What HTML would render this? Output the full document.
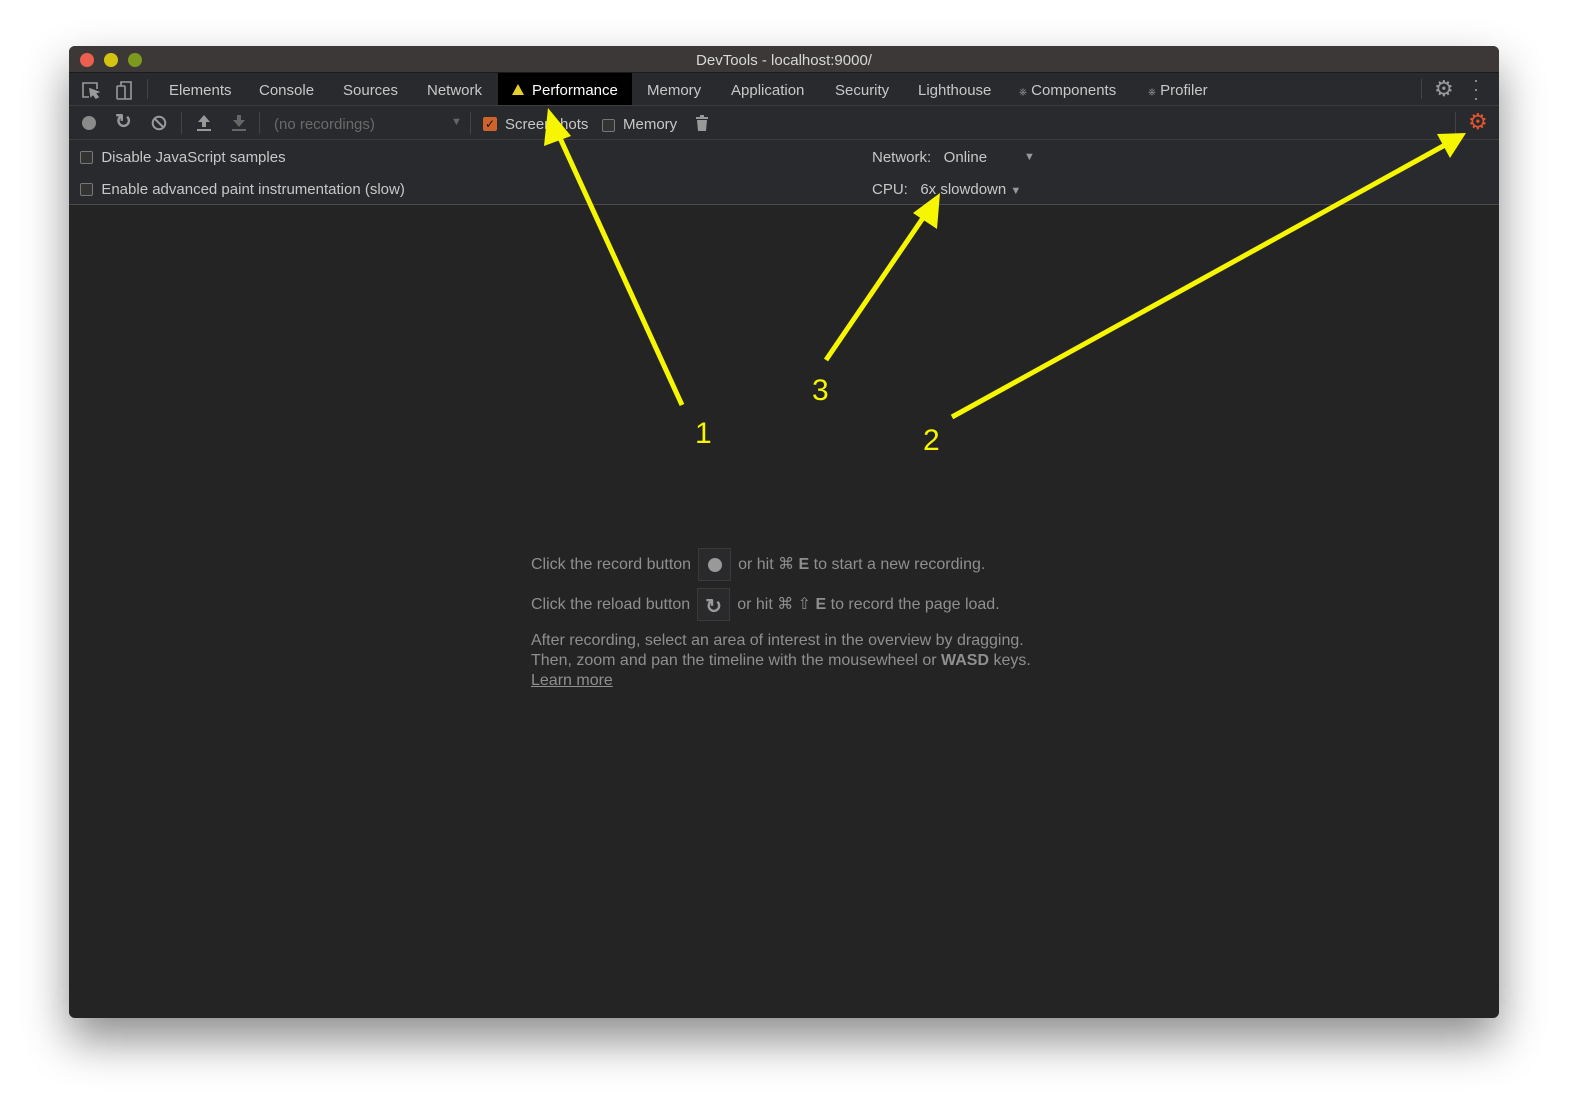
<!DOCTYPE html>
<html><head><meta charset="utf-8"><style>
*{margin:0;padding:0;box-sizing:border-box}
body{width:1572px;height:1112px;background:#fff;position:relative;overflow:hidden;font-family:"Liberation Sans",sans-serif;font-size:15px;color:#bdbdbd}
.win{position:absolute;left:69px;top:46px;width:1430px;height:972px;background:#242424;border-radius:6px;box-shadow:0 22px 45px rgba(0,0,0,.45);overflow:hidden}
.title{position:absolute;left:0;top:0;width:100%;height:27px;background:#3c3838;border-bottom:1px solid #1a1a1a;text-align:center;line-height:30px;color:#d8d8d8;font-size:15px}
.dot{position:absolute;top:7px;width:14px;height:14px;border-radius:50%}
.abs{position:absolute;white-space:nowrap}
.tabs{position:absolute;left:0;top:27px;width:100%;height:33px;background:#292a2d;border-bottom:1px solid #3d3d3d}
.tb{position:absolute;left:0;top:60px;width:100%;height:34px;background:#292a2d;border-bottom:1px solid #3d3d3d}
.set{position:absolute;left:0;top:94px;width:100%;height:65px;background:#292a2d;border-bottom:1px solid #4a4a4a}
.cb{display:inline-block;width:13px;height:13px;border:1px solid #777;border-radius:2px;vertical-align:-2px;background:#333}
.t{color:#c8c8c8}
.msg{color:#8f8f8f;font-size:16px}
.btn{display:inline-block;width:33px;height:33px;border:1px solid #3a3a3a;background:#2a2a2c;vertical-align:middle;margin:0 7px;position:relative}
</style></head><body>
<div class="win">
 <div class="title">DevTools - localhost:9000/
  <div class="dot" style="left:11px;background:#ec5f4f"></div>
  <div class="dot" style="left:35px;background:#d4c411"></div>
  <div class="dot" style="left:59px;background:#7c9a1e"></div>
 </div>
 <div class="tabs">
  <svg class="abs" style="left:12px;top:8px" width="60" height="20" viewBox="0 0 60 20" fill="none" stroke="#9a9a9a" stroke-width="1.6"><path d="M8 16H2V2h14v6"/><path d="M9 8l8 3-3 1 3 4-2 1-3-4-2 2z" fill="#9a9a9a"/><rect x="36" y="5" width="8" height="13" rx="1"/><path d="M40 5V1h10v17h-6"/></svg>
  <div class="abs" style="left:78px;top:6px;width:1px;height:20px;background:#444"></div>
  <div class="abs t" style="left:100px;top:9px">Elements</div>
  <div class="abs t" style="left:190px;top:9px">Console</div>
  <div class="abs t" style="left:274px;top:9px">Sources</div>
  <div class="abs t" style="left:358px;top:9px">Network</div>
  <div class="abs" style="left:429px;top:0;width:134px;height:32px;background:#000"></div>
  <svg class="abs" style="left:442px;top:10px" width="14" height="13"><path d="M7 1L13 12H1z" fill="#e6cf2b"/></svg>
  <div class="abs" style="left:463px;top:9px;color:#fff">Performance</div>
  <div class="abs t" style="left:578px;top:9px">Memory</div>
  <div class="abs t" style="left:662px;top:9px">Application</div>
  <div class="abs t" style="left:766px;top:9px">Security</div>
  <div class="abs t" style="left:849px;top:9px">Lighthouse</div>
  <div class="abs t" style="left:950px;top:9px"><span style="font-size:10px;color:#999">⎈</span> Components</div>
  <div class="abs t" style="left:1079px;top:9px"><span style="font-size:10px;color:#999">⎈</span> Profiler</div>
  <div class="abs" style="left:1352px;top:6px;width:1px;height:20px;background:#444"></div>
  <div class="abs" style="left:1365px;top:3px;font-size:22px;color:#999">⚙</div>
  <div class="abs" style="left:1404px;top:3px;font-size:18px;color:#999;line-height:9px">·<br>·<br>·</div>
 </div>
 <div class="tb">
  <div class="abs" style="left:13px;top:10px;width:14px;height:14px;border-radius:50%;background:#8a8a8a"></div>
  <div class="abs" style="left:46px;top:3px;font-size:20px;color:#999;font-weight:bold">↻</div>
  <svg class="abs" style="left:82px;top:9px" width="16" height="16"><circle cx="8" cy="8" r="6.3" fill="none" stroke="#999" stroke-width="2"/><path d="M3.5 3.5l9 9" stroke="#999" stroke-width="2"/></svg>
  <div class="abs" style="left:112px;top:6px;width:1px;height:22px;background:#444"></div>
  <svg class="abs" style="left:127px;top:8px" width="16" height="18" fill="#999"><path d="M8 1l6 7H10v5H6V8H2z"/><rect x="1" y="15" width="14" height="2"/></svg>
  <svg class="abs" style="left:162px;top:8px" width="16" height="18" fill="#666"><path d="M8 13l6-7H10V1H6v5H2z"/><rect x="1" y="15" width="14" height="2"/></svg>
  <div class="abs" style="left:190px;top:6px;width:1px;height:22px;background:#444"></div>
  <div class="abs" style="left:205px;top:10px;color:#6a6a6a">(no recordings)</div>
  <div class="abs" style="left:382px;top:10px;color:#666;font-size:11px">▼</div>
  <div class="abs" style="left:401px;top:6px;width:1px;height:22px;background:#444"></div>
  <div class="abs" style="left:414px;top:11px;width:14px;height:14px;background:#d0632a;border-radius:2px;color:#111;font-size:12px;line-height:14px;text-align:center">✓</div>
  <div class="abs t" style="left:436px;top:10px">Screenshots</div>
  <div class="abs" style="left:533px;top:11px"><span class="cb"></span></div>
  <div class="abs t" style="left:554px;top:10px">Memory</div>
  <svg class="abs" style="left:627px;top:9px" width="12" height="16" fill="#999"><rect x="0" y="2" width="12" height="2"/><rect x="4" y="0" width="4" height="2"/><path d="M1 5h10l-1 11H2z"/></svg>
  <div class="abs" style="left:1386px;top:6px;width:1px;height:22px;background:#444"></div>
  <div class="abs" style="left:1399px;top:3px;font-size:22px;color:#e4552e">⚙</div>
 </div>
 <div class="set">
  <div class="abs t" style="left:11px;top:9px"><span class="cb"></span>&nbsp; Disable JavaScript samples</div>
  <div class="abs t" style="left:11px;top:41px"><span class="cb"></span>&nbsp; Enable advanced paint instrumentation (slow)</div>
  <div class="abs t" style="left:803px;top:9px">Network:&nbsp;&nbsp; Online</div>
  <div class="abs" style="left:955px;top:11px;color:#999;font-size:11px">▼</div>
  <div class="abs t" style="left:803px;top:41px">CPU:&nbsp;&nbsp; 6x slowdown <span style="font-size:11px;color:#999">▼</span></div>
 </div>
 <div class="abs msg" style="left:462px;top:502px;line-height:33px">Click the record button<span class="btn"><span style="position:absolute;left:9px;top:9px;width:14px;height:14px;border-radius:50%;background:#999"></span></span>or hit ⌘ <b>E</b> to start a new recording.</div>
 <div class="abs msg" style="left:462px;top:542px;line-height:33px">Click the reload button<span class="btn"><span style="position:absolute;left:7px;top:2px;font-size:20px;font-weight:bold;color:#999">↻</span></span>or hit ⌘ ⇧ <b>E</b> to record the page load.</div>
 <div class="abs msg" style="left:462px;top:585px;line-height:20px">After recording, select an area of interest in the overview by dragging.<br>Then, zoom and pan the timeline with the mousewheel or <b>WASD</b> keys.<br><span style="text-decoration:underline">Learn more</span></div>
</div>
<svg class="abs" style="left:0;top:0" width="1572" height="1112">
 <g stroke="#f6f600" stroke-width="5" fill="#f6f600">
  <line x1="682" y1="405" x2="560" y2="138"/>
  <line x1="826" y1="360" x2="925" y2="215"/>
  <line x1="952" y1="417" x2="1445" y2="145"/>
 </g>
 <g fill="#f6f600">
  <path d="M548 108l23 28-27 10z"/>
  <path d="M940 193l-3 36-24-16z"/>
  <path d="M1466 133l-16 25-13-24z"/>
 </g>
 <g fill="#f6f600" font-family="Liberation Sans" font-size="30">
  <text x="695" y="443">1</text><text x="923" y="450">2</text><text x="812" y="400">3</text>
 </g>
</svg>
</body></html>
